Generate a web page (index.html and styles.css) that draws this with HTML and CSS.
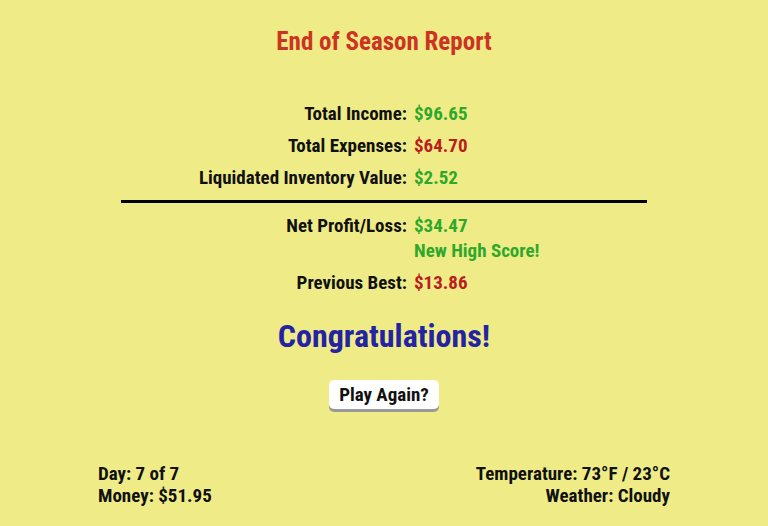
FILE: index.html
```html
<!DOCTYPE html>
<html>
<head>
	<title>End of Season</title>
	<link rel="stylesheet" href="styles.css">
</head>
<body>
	<div class="page">
		<h1 class="title">End of Season Report</h1>
		<div class="report">
			<div class="label">Total Income:</div><div class="val good">$96.65</div>
			<div class="label">Total Expenses:</div><div class="val bad">$64.70</div>
			<div class="label">Liquidated Inventory Value:</div><div class="val good">$2.52</div>
			<div class="rule"></div>
			<div class="label">Net Profit/Loss:</div><div class="val good">$34.47</div>
			<div class="label"></div><div class="val good small">New High Score!</div>
			<div class="label">Previous Best:</div><div class="val bad">$13.86</div>
		</div>
		<div class="congrats">Congratulations!</div>
		<div class="again"><button class="btn">Play Again?</button></div>
		<div class="footer">
			<div class="left">
				<div>Day: 7 of 7</div>
				<div>Money: $51.95</div>
			</div>
			<div class="right">
				<div>Temperature: 73°F / 23°C</div>
				<div>Weather: Cloudy</div>
			</div>
		</div>
	</div>
</body>
</html>
```

FILE: styles.css
```css
*{
	margin: 0px;
	padding: 0px;
}
body{
	background: #efec88;
	font-family: "Roboto Condensed", "Roboto", "Liberation Sans Narrow", sans-serif;
	font-stretch: condensed;
	font-weight: 700;
	color: #111;
	width: 768px;
	height: 526px;
	overflow: hidden;
}
.page{
	padding-top: 27px;
}
.title{
	text-align: center;
	font-size: 25px;
	line-height: 30px;
	color: #cc3322;
}
.report{
	width: 526px;
	margin: 41px auto 0px;
	display: grid;
	grid-template-columns: 286px 1fr;
	column-gap: 7px;
	font-size: 19px;
}
.label{
	text-align: right;
	line-height: 32px;
}
.val{
	line-height: 32px;
}
.val.small{
	line-height: 20px;
	margin: -1px 0px 6px;
}
.good{
	color: #2fa82a;
}
.bad{
	color: #bb1d1d;
}
.rule{
	grid-column: 1 / 3;
	height: 3px;
	background: #000;
	margin: 6px 0px 7px;
}
.congrats{
	text-align: center;
	font-size: 32px;
	line-height: 40px;
	color: #2323a3;
	margin-top: 17px;
}
.again{
	text-align: center;
	margin-top: 24px;
}
.btn{
	font-family: inherit;
	font-stretch: condensed;
	font-weight: 700;
	font-size: 19px;
	line-height: 21px;
	color: #111;
	background: #fff;
	border: none;
	border-radius: 5px;
	padding: 4px 10px;
	box-shadow: 0px 3px 0px #999;
}
.footer{
	display: flex;
	justify-content: space-between;
	margin: 54px 98px 0px;
	font-size: 19px;
	line-height: 22px;
}
.right{
	text-align: right;
}
```
